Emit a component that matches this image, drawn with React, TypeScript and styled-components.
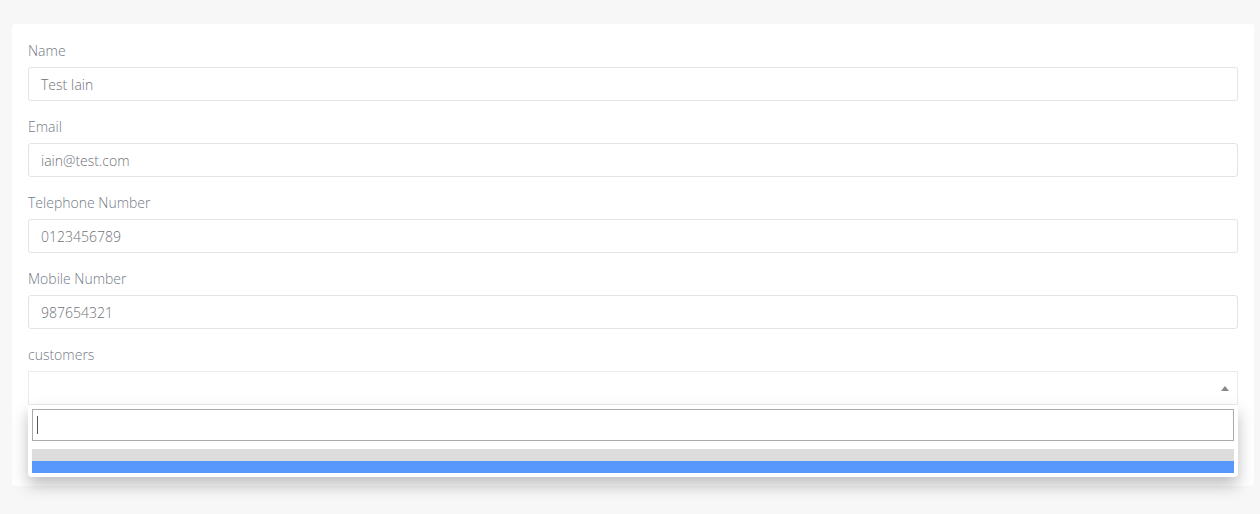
import React from "react";
import styled, { createGlobalStyle } from "styled-components";

const Global = createGlobalStyle`
  html, body { margin: 0; padding: 0; background: #f7f7f7; }
  body { font-family: "Open Sans", "Liberation Sans", sans-serif; }
  * { box-sizing: border-box; }
`;

const Page = styled.div`
  padding: 24px 6px 28px 12px;
`;

const Card = styled.div`
  background: #fff;
  border-radius: 4px;
  padding: 17px 16px 81px;
  display: flex;
  flex-direction: column;
  gap: 16px;
`;

const Group = styled.div`
  display: flex;
  flex-direction: column;
  gap: 6px;
`;

const Label = styled.label`
  font-size: 14px;
  line-height: 20px;
  font-weight: 300;
  color: #737a86;
`;

const Input = styled.div`
  height: 34px;
  border: 1px solid #e1e5e8;
  border-radius: 3px;
  padding: 0 12px;
  display: flex;
  align-items: center;
  font-size: 14px;
  font-weight: 300;
  color: #707278;
`;

const SelectWrap = styled.div`
  position: relative;
`;

const SelectBox = styled.div`
  height: 34px;
  border: 1px solid #ebebeb;
  display: flex;
  align-items: center;
  justify-content: flex-end;
  padding-right: 8px;
`;

const Arrow = styled.span`
  width: 0;
  height: 0;
  border-left: 4px solid transparent;
  border-right: 4px solid transparent;
  border-bottom: 5px solid #888;
`;

const Dropdown = styled.div`
  position: absolute;
  top: 100%;
  left: 0;
  right: 0;
  background: #fff;
  border-radius: 0 0 4px 4px;
  padding: 4px;
  box-shadow: 0 8px 16px rgba(0, 0, 0, 0.26);
  z-index: 5;
`;

const Search = styled.div`
  position: relative;
  height: 32px;
  border: 1px solid #aaa;
`;

const Caret = styled.span`
  position: absolute;
  left: 4px;
  top: 6px;
  width: 1px;
  height: 18px;
  background: #555;
`;

const Results = styled.div`
  margin-top: 8px;
  display: flex;
  flex-direction: column;
`;

const Option = styled.div<{ $hl?: boolean }>`
  height: 12px;
  background: ${(p) => (p.$hl ? "#5897fb" : "#ddd")};
`;

const fields = [
  { label: "Name", value: "Test Iain" },
  { label: "Email", value: "iain@test.com" },
  { label: "Telephone Number", value: "0123456789" },
  { label: "Mobile Number", value: "987654321" },
];

export default function App() {
  return (
    <>
      <Global />
      <Page>
        <Card>
          {fields.map((f) => (
            <Group key={f.label}>
              <Label>{f.label}</Label>
              <Input>{f.value}</Input>
            </Group>
          ))}
          <Group>
            <Label>customers</Label>
            <SelectWrap>
              <SelectBox>
                <Arrow />
              </SelectBox>
              <Dropdown>
                <Search>
                  <Caret />
                </Search>
                <Results>
                  <Option />
                  <Option $hl />
                </Results>
              </Dropdown>
            </SelectWrap>
          </Group>
        </Card>
      </Page>
    </>
  );
}
